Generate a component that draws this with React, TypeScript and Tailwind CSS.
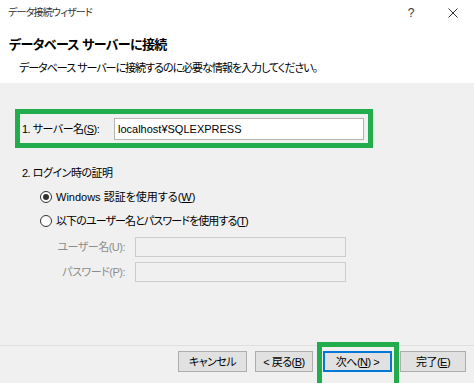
import React from 'react';

function Radio({ checked, children, className }: { checked?: boolean; children: React.ReactNode; className?: string }) {
  return (
    <div className="flex items-center h-[16px] ml-[25px]">
      <span className="w-[12px] h-[12px] rounded-full border border-[#333] bg-white flex items-center justify-center">
        {checked && <span className="w-[6px] h-[6px] rounded-full bg-[#333]" />}
      </span>
      <span className={`ml-[4px] ${className ?? ''}`}>{children}</span>
    </div>
  );
}

function Btn({ w, children, active }: { w: string; children: React.ReactNode; active?: boolean }) {
  return (
    <div
      className={`${w} h-[21px] flex items-center justify-center bg-[#e1e1e1] ${
        active ? 'border-2 border-[#0078d7]' : 'border border-[#adadad]'
      }`}
    >
      {children}
    </div>
  );
}

export default function App() {
  return (
    <div className="w-[474px] h-[383px] overflow-hidden bg-[#f0f0f0] flex flex-col text-[11px] leading-[16px] tracking-[-0.5px] text-black font-['Liberation_Sans','Noto_Sans_CJK_JP',sans-serif] [font-feature-settings:'palt']">
      {/* Header */}
      <div className="bg-white pb-[7px]">
        <div className="h-[26px] flex items-center pl-[8px] pr-[16px] text-[#333]">
          <span className="text-[10px] tracking-[-0.8px]">データ接続ウィザード</span>
          <span className="ml-auto text-[12px]">?</span>
          <svg className="ml-[34px]" width="10" height="10" viewBox="0 0 10 10">
            <path d="M0.5 0.5 L9.5 9.5 M9.5 0.5 L0.5 9.5" stroke="#333" strokeWidth="1" />
          </svg>
        </div>
        <div className="mt-[9px] pl-[9px] text-[13px] leading-[20px] font-bold tracking-[-0.6px]">
          データベース サーバーに接続
        </div>
        <div className="mt-[5px] pl-[19px] tracking-[-1px]">
          データベース サーバーに接続するのに必要な情報を入力してください。
        </div>
      </div>

      {/* Body */}
      <div className="flex-1 px-[15px] pt-[26px]">
        <div className="w-[358px] h-[39px] border-[5px] border-[#22ac4c] flex items-center pl-[2px] pr-[4px]">
          <span>
            1. サーバー名(<span className="underline">S</span>):
          </span>
          <div className="ml-auto w-[250px] h-[22px] bg-white border border-[#b4b4b4] flex items-center pl-[3px] text-[11px] tracking-normal">
            localhost¥SQLEXPRESS
          </div>
        </div>

        <div className="mt-[17px] pl-[7px]">2. ログイン時の証明</div>
        <div className="mt-[8px]">
          <Radio checked className="tracking-normal">
            Windows 認証を使用する(<span className="underline">W</span>)
          </Radio>
        </div>
        <div className="mt-[8px]">
          <Radio className="tracking-[-0.9px]">
            以下のユーザー名とパスワードを使用する(<span className="underline">T</span>)
          </Radio>
        </div>

        <div className="mt-[8px] grid grid-cols-[110px_211px] gap-x-[10px] gap-y-[5px] text-[#8d8d8d]">
          <span className="h-[20px] flex items-center justify-end">ユーザー名(U):</span>
          <div className="h-[20px] bg-[#f0f0f0] border border-[#cccccc]" />
          <span className="h-[20px] flex items-center justify-end">パスワード(P):</span>
          <div className="h-[20px] bg-[#f0f0f0] border border-[#cccccc]" />
        </div>
      </div>

      {/* Footer */}
      <div className="h-[38px] border-t border-[#dfdfdf] flex items-start pt-[5px] pr-[8px]">
        <div className="ml-auto">
          <Btn w="w-[69px]">キャンセル</Btn>
        </div>
        <div className="ml-[8px]">
          <Btn w="w-[58px]">
            &lt; 戻る(<span className="underline">B</span>)
          </Btn>
        </div>
        <div className="ml-[4px] -mt-[9px] h-[60px] border-[5px] border-[#22ac4c] pt-[4px] pl-[1px] pr-[2px]">
          <Btn w="w-[69px]" active>
            次へ(<span className="underline">N</span>) &gt;
          </Btn>
        </div>
        <div className="ml-[1px]">
          <Btn w="w-[66px]">
            完了(<span className="underline">E</span>)
          </Btn>
        </div>
      </div>
    </div>
  );
}
